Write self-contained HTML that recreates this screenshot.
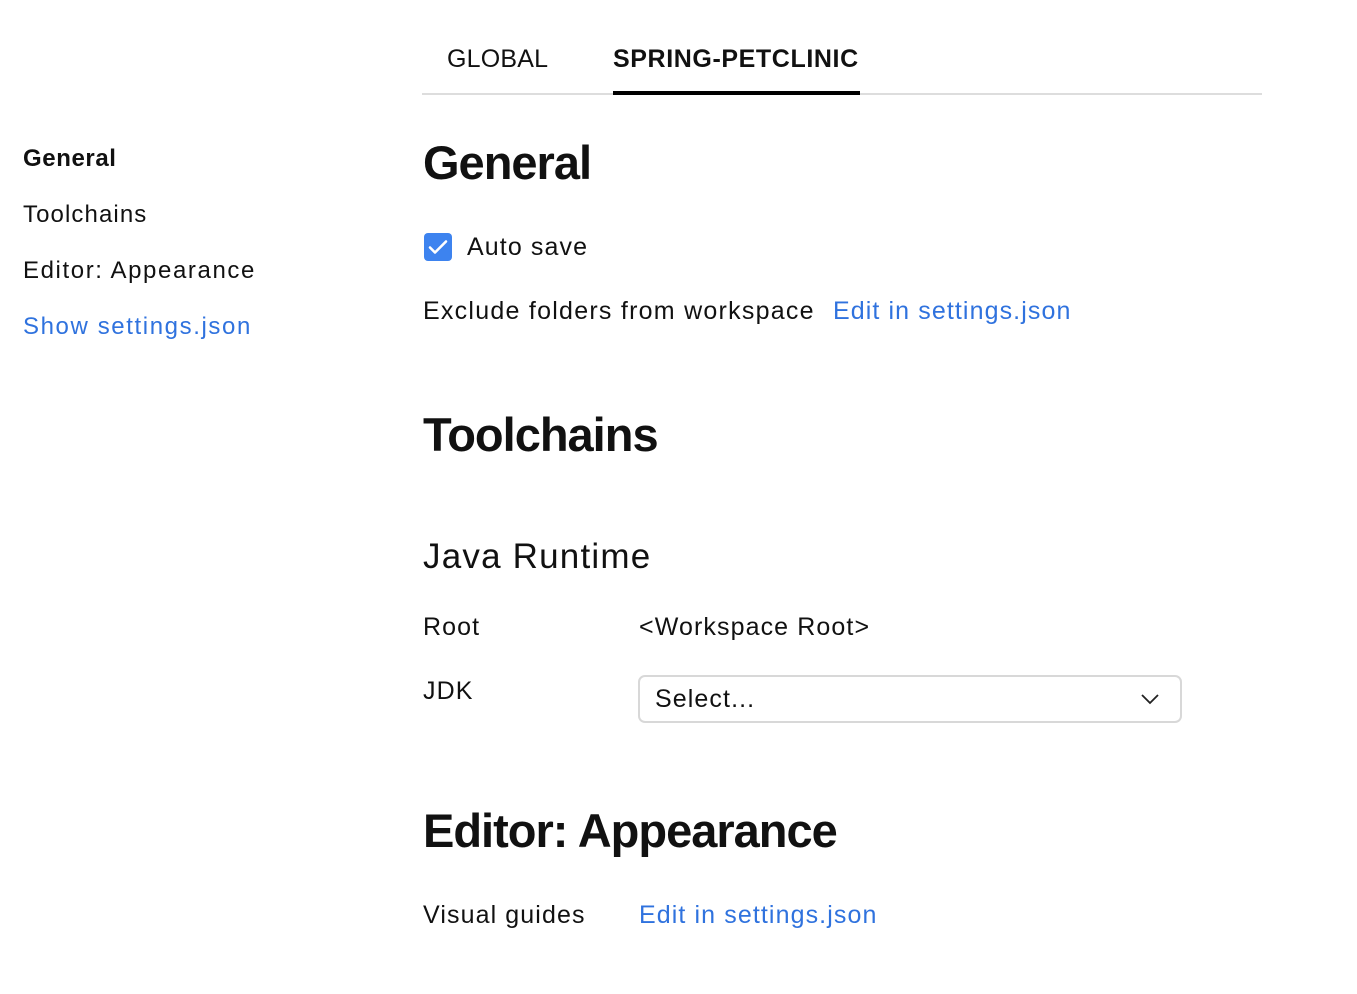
<!DOCTYPE html>
<html><head><meta charset="utf-8"><style>
body{margin:0;width:1357px;height:994px;background:#fff;font-family:"Liberation Sans",sans-serif;color:#111;position:relative;overflow:hidden}
.t{position:absolute;white-space:nowrap;height:40px;line-height:40px;font-size:25px;letter-spacing:1.1px}
.b{font-weight:bold}
.l{color:#2f72de}
.h{font-size:47px;font-weight:bold;height:60px;line-height:60px;letter-spacing:-1px}
</style></head><body>
<div class="t" style="left:447px;top:39px;font-size:25px;letter-spacing:0.2px">GLOBAL</div>
<div class="t b" style="left:613px;top:39px;font-size:25px;letter-spacing:0.6px">SPRING-PETCLINIC</div>
<div style="position:absolute;left:422px;top:93px;width:840px;height:2px;background:#ddd"></div>
<div style="position:absolute;left:613px;top:91px;width:247px;height:4px;background:#000"></div>

<div class="t b" style="left:23px;top:139px;font-size:24px;letter-spacing:0.6px">General</div>
<div class="t" style="left:23px;top:195px;font-size:24px;letter-spacing:1.1px">Toolchains</div>
<div class="t" style="left:23px;top:251px;font-size:24px;letter-spacing:1.6px">Editor: Appearance</div>
<div class="t l" style="left:23px;top:307px;font-size:24px;letter-spacing:1.6px">Show settings.json</div>

<div class="t h" style="left:423px;top:133px">General</div>
<div style="position:absolute;left:424px;top:233px;width:28px;height:28px;background:#3d83ef;border-radius:4px">
<svg width="28" height="28" viewBox="0 0 28 28"><path d="M6 14.5l5 5 11-11" fill="none" stroke="#fff" stroke-width="2.6" stroke-linecap="round" stroke-linejoin="round"/></svg></div>
<div class="t" style="left:467px;top:227px">Auto save</div>
<div class="t" style="left:423px;top:291px;letter-spacing:1.25px">Exclude folders from workspace</div>
<div class="t l" style="left:833px;top:291px">Edit in settings.json</div>

<div class="t h" style="left:423px;top:405px">Toolchains</div>
<div class="t" style="left:423px;top:535px;font-size:35px;height:44px;line-height:44px;letter-spacing:1.2px">Java Runtime</div>
<div class="t" style="left:423px;top:607px">Root</div>
<div class="t" style="left:639px;top:607px">&lt;Workspace Root&gt;</div>
<div class="t" style="left:423px;top:671px">JDK</div>
<div style="position:absolute;left:638px;top:675px;width:540px;height:44px;border:2px solid #d8d8d8;border-radius:7px"></div>
<div class="t" style="left:655px;top:679px">Select...</div>
<svg style="position:absolute;left:1140px;top:692px" width="20" height="14" viewBox="0 0 20 14"><path d="M2 3l8 8 8-8" fill="none" stroke="#222" stroke-width="1.8"/></svg>

<div class="t h" style="left:423px;top:801px">Editor: Appearance</div>
<div class="t" style="left:423px;top:895px">Visual guides</div>
<div class="t l" style="left:639px;top:895px">Edit in settings.json</div>
</body></html>
